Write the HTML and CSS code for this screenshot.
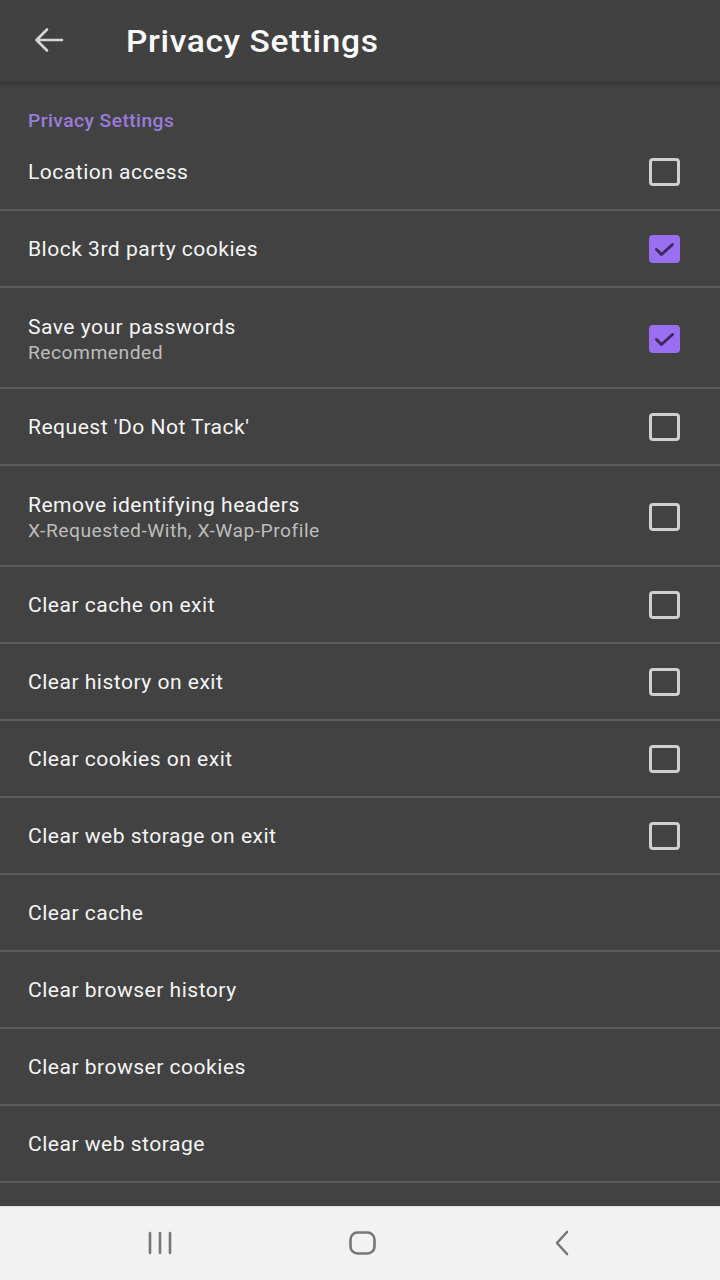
FILE: index.html
```html
<!DOCTYPE html>
<html>
<head>
<meta charset="utf-8">
<link rel="stylesheet" href="styles.css">
</head>
<body>
<div class="screen">
  <header class="appbar">
    <svg class="back" width="30" height="26" viewBox="0 0 30 26"><path d="M28 13H3M13 2.5L2.5 13 13 23.5" fill="none" stroke="#d6d6d6" stroke-width="2.6" stroke-linecap="round" stroke-linejoin="round"/></svg>
    <h1 class="title">Privacy Settings</h1>
  </header>
  <main class="list">
    <div class="section"><span>Privacy Settings</span></div>
    <div class="row"><div class="text"><div class="label">Location access</div></div><span class="cb"></span></div>
    <div class="row"><div class="text"><div class="label">Block 3rd party cookies</div></div><span class="cb on"><svg viewBox="0 0 31 28" width="31" height="28"><path d="M7.5 14.5l5 5 11-10" fill="none" stroke="#3b2a5a" stroke-width="3" stroke-linecap="round" stroke-linejoin="round"/></svg></span></div>
    <div class="row tall"><div class="text"><div class="label">Save your passwords</div><div class="sub">Recommended</div></div><span class="cb on"><svg viewBox="0 0 31 28" width="31" height="28"><path d="M7.5 14.5l5 5 11-10" fill="none" stroke="#3b2a5a" stroke-width="3" stroke-linecap="round" stroke-linejoin="round"/></svg></span></div>
    <div class="row"><div class="text"><div class="label">Request 'Do Not Track'</div></div><span class="cb"></span></div>
    <div class="row tall"><div class="text"><div class="label">Remove identifying headers</div><div class="sub">X-Requested-With, X-Wap-Profile</div></div><span class="cb"></span></div>
    <div class="row"><div class="text"><div class="label">Clear cache on exit</div></div><span class="cb"></span></div>
    <div class="row"><div class="text"><div class="label">Clear history on exit</div></div><span class="cb"></span></div>
    <div class="row"><div class="text"><div class="label">Clear cookies on exit</div></div><span class="cb"></span></div>
    <div class="row"><div class="text"><div class="label">Clear web storage on exit</div></div><span class="cb"></span></div>
    <div class="row"><div class="text"><div class="label">Clear cache</div></div></div>
    <div class="row"><div class="text"><div class="label">Clear browser history</div></div></div>
    <div class="row"><div class="text"><div class="label">Clear browser cookies</div></div></div>
    <div class="row"><div class="text"><div class="label">Clear web storage</div></div></div>
    <div class="row rest"></div>
  </main>
  <nav class="navbar">
    <svg width="30" height="26" viewBox="0 0 30 26"><path d="M4 3v20M14 3v20M24 3v20" stroke="#777" stroke-width="2.6" stroke-linecap="round"/></svg>
    <svg width="30" height="26" viewBox="0 0 30 26"><rect x="2.5" y="2.5" width="24" height="21" rx="7" fill="none" stroke="#777" stroke-width="2.6"/></svg>
    <svg width="30" height="26" viewBox="0 0 30 26"><path d="M17 2L7 13l10 11" fill="none" stroke="#777" stroke-width="2.6" stroke-linecap="round" stroke-linejoin="round"/></svg>
  </nav>
</div>
</body>
</html>
```
FILE: styles.css
```css
* { box-sizing: border-box; margin: 0; padding: 0; }
html, body { width: 720px; height: 1280px; overflow: hidden; }
body { background: #424242; font-family: Roboto, "Noto Sans", sans-serif; color: #f4f4f4; }
.screen { display: flex; flex-direction: column; height: 1280px; }
.appbar {
  height: 83px; flex: none; display: flex; align-items: center;
  background: #414141; border-bottom: 1px solid #383838;
  box-shadow: 0 1px 2px rgba(0,0,0,0.25);
  padding-left: 34px; position: relative; z-index: 1;
}
.back { margin-top: -2px; }
.title {
  font-size: 31px; font-weight: 500; margin-left: 62px; color: #fafafa; letter-spacing: 0.6px;
  transform: scaleX(1.08); transform-origin: left center;
}
.list { flex: 1; overflow: hidden; display: flex; flex-direction: column; }
.section {
  color: #9a7cdc; font-size: 17.5px; font-weight: 500; letter-spacing: 0.4px;
  padding: 28px 28px 0; height: 51px; flex: none;
}
.section span { display: inline-block; transform: scaleX(1.1); transform-origin: left center; }
.row {
  flex: none; height: 77px; display: flex; align-items: center; justify-content: space-between;
  padding: 2px 40px 0 28px; border-bottom: 2px solid #5c5c5c;
}
.row .cb { margin-top: -2px; }
.row.tall { height: 101px; padding-top: 4px; }
.row.rest { flex: 1; border-bottom: none; }
.text { display: flex; flex-direction: column; align-items: flex-start; }
.label {
  font-size: 19.5px; letter-spacing: 0.45px; color: #f5f5f5;
  transform: scaleX(1.08); transform-origin: left center;
}
.sub {
  font-size: 18px; letter-spacing: 0.45px; color: #bdbdbd; margin-top: 3px;
  transform: scaleX(1.07); transform-origin: left center;
}
.cb {
  width: 31px; height: 28px; border: 3px solid #cfcfcf; border-radius: 4px; flex: none;
  display: flex; align-items: center; justify-content: center;
}
.cb.on { background: #9a6ef0; border-color: #9a6ef0; }
.cb.on svg { flex: none; }
.navbar {
  height: 74px; flex: none; background: #f2f2f2; border-top: 1px solid #dcdcdc;
  display: flex; align-items: center; gap: 172px;
  padding: 0 0 2px 146px;
}
```
